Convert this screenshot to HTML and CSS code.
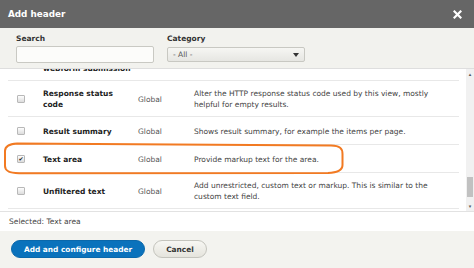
FILE: index.html
```html
<!DOCTYPE html>
<html>
<head>
    <link rel="stylesheet" href="styles.css">
    <title>Add header</title>
</head>
<body>
    <div class="dialog">
        <div class="titlebar">
            <span class="title">Add header</span>
            <svg class="close" width="9" height="9" viewBox="0 0 9 9">
                <path d="M1.5 1.5 L7.5 7.5 M7.5 1.5 L1.5 7.5" stroke="#fff" stroke-width="2.2" stroke-linecap="square"/>
            </svg>
        </div>

        <div class="filters">
            <div class="field">
                <label>Search</label>
                <div class="text-input"></div>
            </div>
            <div class="field">
                <label>Category</label>
                <div class="select">
                    <span>- All -</span>
                    <svg width="6" height="4" viewBox="0 0 6 4"><path d="M0 0 L6 0 L3 4 Z" fill="#333"/></svg>
                </div>
            </div>
        </div>

        <div class="listing">
            <div class="viewport">
                <table class="views-table">
                    <tr class="partial">
                        <td class="check"></td>
                        <td class="name">webform submission</td>
                        <td class="group"></td>
                        <td class="desc"></td>
                    </tr>
                    <tr>
                        <td class="check"><span class="checkbox"></span></td>
                        <td class="name">Response status<br>code</td>
                        <td class="group">Global</td>
                        <td class="desc">Alter the HTTP response status code used by this view, mostly<br>helpful for empty results.</td>
                    </tr>
                    <tr>
                        <td class="check"><span class="checkbox"></span></td>
                        <td class="name">Result summary</td>
                        <td class="group">Global</td>
                        <td class="desc">Shows result summary, for example the items per page.</td>
                    </tr>
                    <tr>
                        <td class="check"><span class="checkbox checked">&#10004;</span></td>
                        <td class="name">Text area</td>
                        <td class="group">Global</td>
                        <td class="desc">Provide markup text for the area.</td>
                    </tr>
                    <tr>
                        <td class="check"><span class="checkbox"></span></td>
                        <td class="name">Unfiltered text</td>
                        <td class="group">Global</td>
                        <td class="desc">Add unrestricted, custom text or markup. This is similar to the<br>custom text field.</td>
                    </tr>
                </table>
            </div>
            <div class="scrollbar">
                <div class="arrow">&#9652;</div>
                <div class="track"><div class="thumb"></div></div>
                <div class="arrow">&#9662;</div>
            </div>
        </div>

        <div class="selected">Selected: Text area</div>

        <div class="actions">
            <button class="btn primary">Add and configure header</button>
            <button class="btn">Cancel</button>
        </div>

        <svg class="annotation" width="474" height="268" viewBox="0 0 474 268">
            <path d="M17 143.5 C9 144 5 146 5 151 L5 166 C5 171 9 173 19 173.3 L328 173 C338 172.6 342.5 170 342.5 165 L342.5 154 C342.5 148 340 146 331 145.6 Z"
                  fill="none" stroke="#f27a22" stroke-width="2"/>
        </svg>
    </div>
</body>
</html>
```

FILE: styles.css
```css
body {
    margin: 0;
    font-family: 'DejaVu Sans', Verdana, sans-serif;
    font-size: 7.5px;
    color: #333;
    background-color: white;
}
.dialog {
    position: relative;
    width: 474px;
    height: 268px;
    overflow: hidden;
    display: flex;
    flex-direction: column;
}
.titlebar {
    height: 28px;
    flex: none;
    background-color: #666666;
    display: flex;
    align-items: center;
    justify-content: space-between;
    padding: 0 12px 0 8px;
}
.title {
    color: #fff;
    font-weight: bold;
    font-size: 8.8px;
}
.filters {
    flex: none;
    background-color: #f2f2ee;
    border-bottom: 1px solid #dedede;
    box-sizing: border-box;
    height: 41px;
    display: flex;
    gap: 13px;
    padding: 5px 0 0 16px;
}
.field {
    display: flex;
    flex-direction: column;
    width: 138px;
}
.field label {
    font-weight: bold;
    color: #333;
    line-height: 12px;
    height: 13px;
}
.text-input {
    height: 17px;
    box-sizing: border-box;
    border: 1px solid #c9c9c3;
    border-radius: 2px;
    background-color: #fcfcfa;
}
.select {
    height: 15px;
    box-sizing: border-box;
    margin-top: 1px;
    border: 1px solid #c8c8c2;
    border-radius: 2px;
    background: linear-gradient(#f6f6f3, #e6e6e2);
    display: flex;
    align-items: center;
    justify-content: space-between;
    padding: 0 5px;
    color: #555;
}
.listing {
    height: 143px;
    flex: none;
    box-sizing: border-box;
    border-bottom: 1px solid #e2e2e2;
    display: flex;
}
.viewport {
    flex: 1;
    overflow: hidden;
    padding: 0 7px 0 8px;
}
.views-table {
    border-collapse: collapse;
    width: 100%;
    margin-top: -24px;
}
.views-table tr {
    height: 28px;
}
.views-table td {
    border-bottom: 1px solid #e8e8e8;
    padding: 7px 0 6px 0;
    line-height: 11px;
    vertical-align: middle;
}
.views-table .partial td {
    padding-top: 18px;
}
.views-table .check {
    width: 35px;
}
.views-table .name {
    width: 95px;
    font-weight: bold;
    color: #222;
}
.views-table .group {
    width: 56px;
    color: #555;
}
.views-table .desc {
    color: #444;
}
.checkbox {
    display: block;
    width: 6px;
    height: 6px;
    margin-left: 9px;
    border: 1px solid #b8b8b8;
    border-radius: 1px;
    background: linear-gradient(#fdfdfd, #dcdcdc);
    font-size: 6px;
    line-height: 6px;
    text-align: center;
    color: #222;
}
.scrollbar {
    width: 8px;
    flex: none;
    background-color: #f1f1f1;
    display: flex;
    flex-direction: column;
}
.arrow {
    height: 10px;
    font-size: 5px;
    line-height: 10px;
    text-align: center;
    color: #555;
}
.track {
    flex: 1;
    padding: 98px 0 0 1px;
}
.thumb {
    width: 6px;
    height: 20px;
    background-color: #c1c1c1;
}
.selected {
    height: 19px;
    flex: none;
    line-height: 20px;
    padding-left: 9px;
    color: #444;
}
.actions {
    flex: 1;
    background-color: #f3f3ef;
    display: flex;
    gap: 8px;
    padding: 9px 11px;
    align-items: flex-start;
}
.btn {
    height: 18px;
    border-radius: 9px;
    font-family: 'DejaVu Sans', Verdana, sans-serif;
    font-size: 7.4px;
    font-weight: bold;
    padding: 0 12px;
    border: 1px solid #c4c4bd;
    background: linear-gradient(#f7f7f3, #e5e4dd);
    color: #333;
}
.btn.primary {
    background: #0a72bc;
    border-color: #0a68ab;
    color: #fff;
}
.annotation {
    position: absolute;
    left: 0;
    top: 0;
    pointer-events: none;
}
```
